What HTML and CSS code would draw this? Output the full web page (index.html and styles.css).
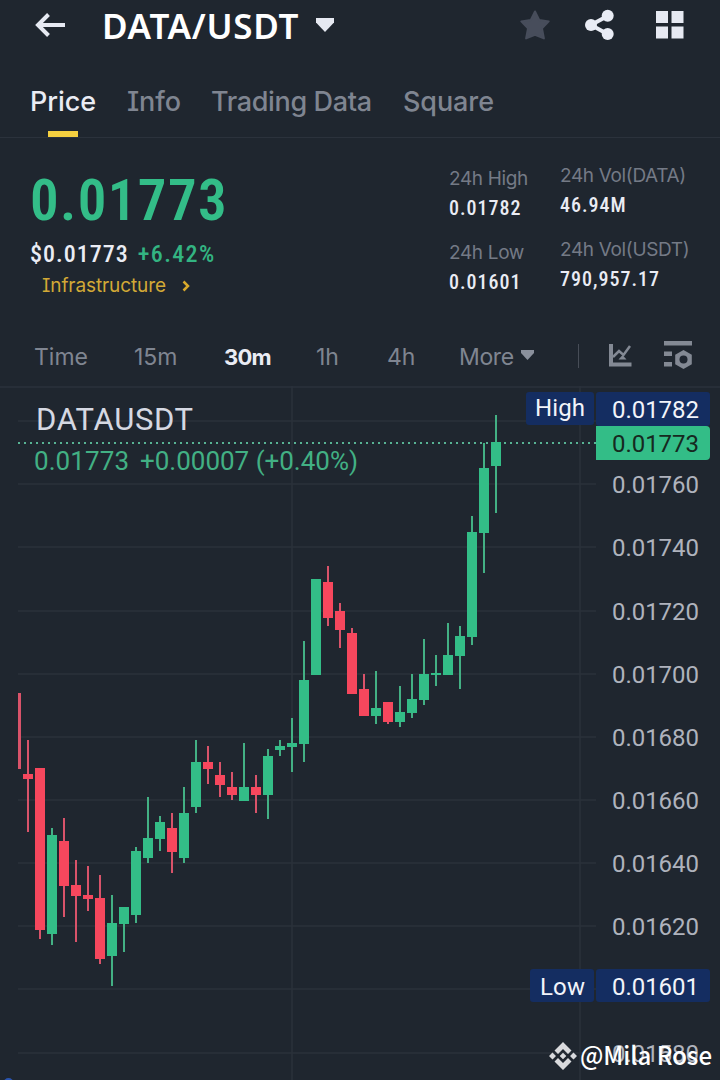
FILE: index.html
```html
<!DOCTYPE html>
<html lang="en">
<head>
    <meta charset="UTF-8">
    <meta name="viewport" content="width=device-width, initial-scale=1.0">
    <title>DATA/USDT</title>
    <link rel="stylesheet" href="styles.css">
</head>
<body>
    <header class="topbar">
        <svg class="back" width="32" height="26" viewBox="0 0 32 26"><path d="M31 13H4M14.500 2.500L4 13l10.500 10.500" fill="none" stroke="#e6e9f2" stroke-width="4"/></svg>
        <h1>DATA/USDT</h1>
        <svg class="caret" width="18" height="14" viewBox="0 0 18 14"><path d="M0 0h18v4.500L9 14 0 4.500z" fill="#e6e9f2"/></svg>
        <div class="actions">
            <svg width="32" height="32" viewBox="0 0 32 32"><path d="M16 2.500l4.300 8.600 9.400 1.300-6.700 7 1.900 10-8.900-3.600-8.900 3.600 1.900-10-6.700-7 9.400-1.300z" fill="#474d5b" stroke="#474d5b" stroke-width="2" stroke-linejoin="round"/></svg>
            <svg class="share" width="32" height="32" viewBox="0 0 32 32"><path d="M23.500 7L7 16l16.500 9" fill="none" stroke="#e9ecf5" stroke-width="4"/><g fill="#e9ecf5"><circle cx="23.700" cy="6.800" r="6"/><circle cx="7" cy="16" r="6"/><circle cx="23.700" cy="25" r="6"/></g></svg>
            <svg width="28" height="28" viewBox="0 0 28 28"><path d="M0 0h12v12H0zM15.500 0h12v12h-12zM0 15.500h12v12H0zM15.500 15.500h12v12h-12z" fill="#e6e9f2"/></svg>
        </div>
    </header>

    <nav class="tabs">
        <a class="active">Price</a>
        <a class="t-info">Info</a>
        <a class="t-data">Trading Data</a>
        <a class="t-square">Square</a>
    </nav>

    <section class="summary">
        <div class="quote">
            <div class="price">0.01773</div>
            <div class="fiat"><span>$0.01773</span> <span class="up">+6.42%</span></div>
            <div class="tag"><span>Infrastructure</span>
                <svg width="8" height="12" viewBox="0 0 8 12"><path d="M1.500 1.500L6 6l-4.500 4.500" fill="none" stroke="#d9aa2c" stroke-width="2.500"/></svg>
            </div>
        </div>
        <dl class="stats">
            <dt>24h High</dt><dd>0.01782</dd>
            <dt>24h Low</dt><dd>0.01601</dd>
        </dl>
        <dl class="stats volume">
            <dt>24h Vol(DATA)</dt><dd>46.94M</dd>
            <dt>24h Vol(USDT)</dt><dd>790,957.17</dd>
        </dl>
    </section>

    <nav class="intervals">
        <a class="i-time">Time</a>
        <a class="i-15">15m</a>
        <a class="i-30 active">30m</a>
        <a class="i-1h">1h</a>
        <a class="i-4h">4h</a>
        <a class="i-more">More</a>
        <svg class="small-caret" width="13" height="10" viewBox="0 0 13 10"><path d="M0 0h13v3L6.500 10 0 3z" fill="#8a909c"/></svg>
        <span class="divider"></span>
        <svg class="ind" width="23" height="23" viewBox="0 0 23 23"><path d="M2 0v20.500h20.500" fill="none" stroke="#838994" stroke-width="4"/><path d="M4 13l6-6 4.500 4L21 2" fill="none" stroke="#838994" stroke-width="2.500"/><path d="M13.500 11l4 4.500h-8z" fill="#838994"/></svg>
        <svg class="set" width="28" height="28" viewBox="0 0 28 28"><path d="M0 0h28v4.500H0zM0 10.500h8V15H0zM0 21h8v4.500H0z" fill="#838994"/><path d="M19.500 9l8.300 4.800v9.400L19.500 28l-8.300-4.800v-9.400z" fill="#838994"/><circle cx="19.500" cy="18.500" r="4" fill="#1f2630"/></svg>
    </nav>

    <main class="chart">
        <svg id="chart" width="720" height="694" viewBox="0 386 720 694">
            <g id="grid" class="grid"></g>
            <path class="last-line" d="M18 443H596"/>
            <g id="candles"></g>
            <g id="axis" class="axis"></g>
            <text class="symbol" x="36" y="430" textLength="157">DATAUSDT</text>
            <text class="legend" x="34" y="470" textLength="95">0.01773</text>
            <text class="legend" x="140" y="470" textLength="218">+0.00007 (+0.40%)</text>
            <g class="extreme">
                <rect x="526" y="392" width="68" height="33" rx="3"/>
                <rect x="596" y="392" width="114" height="34" rx="3"/>
                <text x="535" y="416" textLength="50">High</text>
                <text x="612" y="418" textLength="87">0.01782</text>
                <rect x="530" y="969" width="64" height="33" rx="3"/>
                <rect x="596" y="969" width="114" height="33" rx="3"/>
                <text x="540" y="995" textLength="45">Low</text>
                <text x="612" y="995" textLength="87">0.01601</text>
            </g>
            <path class="last-box" d="M596 426h110a4 4 0 0 1 4 4v26a4 4 0 0 1-4 4H596z"/>
            <text class="last-text" x="612" y="452" textLength="87">0.01773</text>
            <circle cx="8.500" cy="1083" r="5" fill="#2a55b0"/>
            <g transform="translate(563 1056)" fill="#d9dadd">
                <path d="M0-14L8.500-5.500 5-2 0-7-5-2-8.500-5.500zM0 14L8.500 5.500 5 2 0 7-5 2-8.500 5.500zM0-3.300L3.300 0 0 3.300-3.300 0zM-10.500-3.500L-7 0l-3.500 3.500L-14 0zM10.500-3.500L14 0l-3.500 3.500L7 0z"/>
            </g>
            <text class="watermark" x="580" y="1065" textLength="132" lengthAdjust="spacingAndGlyphs">@Mila Rose</text>
        </svg>
    </main>

    <script>
    // center x, high, body top, body bottom, low, color
    const candles = [
        [28, 740, 774, 779, 832, "down"], [40, 768, 768, 930, 939, "down"],
        [52, 828, 835, 934, 945, "up"], [64, 818, 841, 886, 917, "down"],
        [76, 860, 885, 896, 942, "down"], [88, 866, 895, 899, 911, "down"],
        [100, 875, 898, 959, 964, "down"], [112, 895, 923, 956, 986, "up"],
        [124, 907, 907, 924, 952, "up"], [136, 847, 851, 915, 923, "up"],
        [148, 797, 838, 858, 863, "up"], [160, 816, 822, 839, 851, "up"],
        [172, 813, 828, 852, 873, "down"], [184, 787, 813, 858, 863, "up"],
        [196, 740, 762, 807, 813, "up"], [208, 746, 762, 769, 784, "down"],
        [220, 762, 775, 785, 797, "down"], [232, 772, 787, 795, 800, "down"],
        [244, 743, 787, 801, 801, "up"], [256, 775, 787, 795, 813, "down"],
        [268, 749, 756, 795, 819, "up"], [280, 740, 746, 750, 756, "up"],
        [292, 718, 743, 747, 772, "up"], [304, 641, 680, 744, 762, "up"],
        [316, 579, 579, 675, 675, "up"], [328, 566, 582, 618, 626, "down"],
        [340, 603, 611, 630, 648, "down"], [352, 628, 633, 694, 694, "down"],
        [364, 674, 689, 716, 716, "down"], [376, 671, 708, 716, 724, "up"],
        [388, 702, 702, 722, 724, "down"], [400, 686, 712, 722, 727, "up"],
        [412, 674, 699, 713, 718, "up"], [424, 639, 674, 700, 705, "up"],
        [436, 655, 673, 675, 686, "up"], [448, 623, 655, 675, 675, "up"],
        [460, 626, 636, 656, 689, "up"], [472, 516, 532, 637, 645, "up"],
        [484, 443, 468, 533, 573, "up"], [496, 415, 442, 466, 513, "up"]
    ];
    // first candle is cut off by the left edge
    let html = '<rect class="edge" x="18" y="693" width="3" height="76"/>';
    candles.forEach(([x, high, top, bottom, low, cls]) => {
        html += `<path class="wick ${cls}" d="M${x} ${high}V${low}"/>`;
        html += `<rect class="${cls}" x="${x - 5}" y="${top}" width="10" height="${bottom - top}"/>`;
    });
    document.getElementById("candles").innerHTML = html;

    let grid = '<path d="M292 386V1080M580 386V1080"/>';
    let axis = "";
    for (let i = 0; i < 11; i++) {
        const y = Math.round(421.150 + i * 63.140);
        grid += `<path d="M18 ${y}H596"/>`;
        const price = (1780 - i * 20) / 100000;
        // the top label and the 0.01600 label sit under the High and Low boxes
        if (i != 0 && i != 9) {
            axis += `<text x="612" y="${y + 9}" textLength="87">${price.toFixed(5)}</text>`;
        }
    }
    document.getElementById("grid").innerHTML = grid;
    document.getElementById("axis").innerHTML = axis;
    </script>
</body>
</html>
```
FILE: styles.css
```css
* { box-sizing: border-box; }
body {
    margin: 0;
    width: 720px;
    height: 1080px;
    overflow: hidden;
    background: #1f262f;
    color: #eaecf4;
    font-family: Inter, "Noto Sans", sans-serif;
    font-feature-settings: "cv08";
}
svg { display: block; flex: none; }
.topbar {
    display: flex;
    align-items: center;
    height: 52px;
    padding: 0 36px 2px 34px;
}
.topbar h1 {
    width: 197px;
    margin: 2px 0 0 36px;
    font-family: "Noto Sans", sans-serif;
    font-size: 35px;
    line-height: 50px;
    font-weight: 600;
    letter-spacing: .7px;
    color: #fff;
    white-space: nowrap;
}
.caret { margin-left: 17px; }
.actions {
    display: flex;
    align-items: center;
    margin-left: auto;
}
.share { margin: 0 40px 0 33px; }
.tabs {
    display: flex;
    height: 86px;
    padding: 30px 0 0 30px;
    border-bottom: 1px solid #2b323c;
    font-size: 27px;
    line-height: 40px;
    font-weight: 500;
    letter-spacing: -.1px;
    color: #7f8591;
    white-space: nowrap;
}
.tabs .active {
    display: flex;
    flex-direction: column;
    align-items: center;
    width: 66px;
    color: #eaecf4;
}
.tabs .active::after {
    content: "";
    width: 30px;
    height: 6px;
    margin-top: 9px;
    background: #f5d040;
}
.t-info { width: 54px; margin-left: 31px; }
.t-data { width: 161px; margin-left: 30px; letter-spacing: -.35px; }
.t-square { margin-left: 31px; }
.summary {
    display: flex;
    height: 193px;
    padding: 27px 0 0 31px;
    white-space: nowrap;
}
.quote { width: 418px; }
.price {
    margin-left: -1px;
    font-family: Roboto, sans-serif;
    font-stretch: 85%;
    font-size: 57px;
    line-height: 72px;
    font-weight: 600;
    letter-spacing: 1.4px;
    color: #33bd88;
}
.fiat {
    display: flex;
    gap: 9px;
    margin-left: -1px;
    font-family: Roboto, sans-serif;
    font-stretch: 85%;
    font-size: 24px;
    line-height: 34px;
    font-weight: 500;
    letter-spacing: 1px;
}
.fiat .up { color: #33b482; letter-spacing: 1.400px; }
.tag {
    display: flex;
    align-items: center;
    gap: 16px;
    margin-left: 11px;
    font-size: 19px;
    line-height: 29px;
    letter-spacing: -.1px;
    color: #d2a936;
}
.stats {
    width: 111px;
    margin: 0;
}
.stats dt {
    height: 28px;
    font-size: 19px;
    line-height: 28px;
    letter-spacing: -.35px;
    color: #747a86;
}
.stats dd {
    height: 30px;
    margin: 0 0 16px;
    font-family: Roboto, sans-serif;
    font-stretch: 85%;
    font-size: 20px;
    line-height: 30px;
    font-weight: 500;
    letter-spacing: 1px;
}
.volume { margin-top: -3px; }
.intervals {
    display: flex;
    align-items: center;
    height: 57px;
    padding: 0 26px 5px 34px;
    border-bottom: 2px solid #272e38;
    font-size: 23px;
    line-height: 28px;
    color: #7f8591;
    white-space: nowrap;
}
.intervals a { padding-top: 1px; }
.intervals .active {
    font-size: 22px;
    font-weight: 700;
    letter-spacing: -.8px;
    color: #eaecf4;
}
.i-time { width: 100px; }
.i-15 { width: 90px; }
.i-30 { width: 92px; }
.i-1h { width: 71px; }
.i-4h { width: 72px; }
.i-more { width: 62px; letter-spacing: -.4px; }
.small-caret { margin-bottom: 2px; }
.divider {
    width: 1px;
    height: 24px;
    margin: 0 30px 0 44px;
    background: #474d57;
}
.ind, .set { margin-bottom: 2px; }
.set { margin-left: 32px; }
.chart {
    height: 692px;
    margin-top: -2px;
    font-family: Roboto, sans-serif;
}
.grid path { stroke: #2b323b; stroke-width: 1.500; fill: none; }
.last-line {
    stroke: #58b394;
    stroke-width: 2;
    stroke-dasharray: 2 4;
}
.up { fill: #33bd87; }
.down { fill: #f6475d; }
.edge { fill: #d9536a; }
.wick { stroke-width: 2; }
.wick.up { stroke: #43b084; }
.wick.down { stroke: #d9536a; }
.axis text { font-size: 24px; fill: #afb3bd; }
.symbol { font-size: 31px; fill: #d5d8e2; }
.legend { font-size: 26px; fill: #42b084; }
.extreme rect { fill: #142d61; }
.extreme text { font-size: 24px; fill: #f2f4fa; }
.last-box { fill: #33bd87; }
.last-text { font-size: 24px; fill: #16291f; }
.watermark {
    font-family: "Noto Sans CJK SC", "Noto Sans", sans-serif;
    font-size: 25px;
    font-weight: 500;
    fill: #fff;
}
```
